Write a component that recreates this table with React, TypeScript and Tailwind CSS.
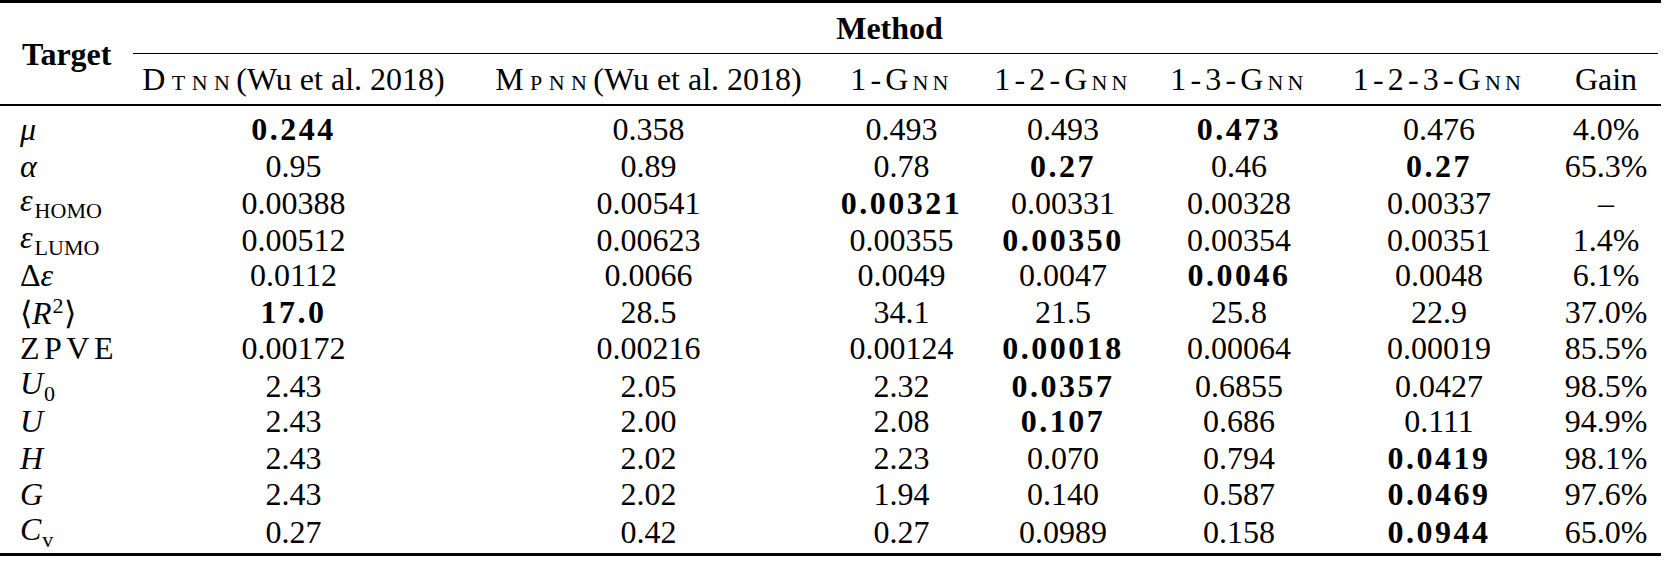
import type { ReactNode } from 'react'

// Results table data, a leading '*' marks the best value in a row
const rows: { label: ReactNode; values: string[] }[] = [
  { label: <i>μ</i>, values: ['*0.244', '0.358', '0.493', '0.493', '*0.473', '0.476', '4.0%'] },
  { label: <i>α</i>, values: ['0.95', '0.89', '0.78', '*0.27', '0.46', '*0.27', '65.3%'] },
  {
    label: (
      <span>
        <i className="pr-[2px]">ε</i>
        <span className="align-[-7px] text-[22px]">HOMO</span>
      </span>
    ),
    values: ['0.00388', '0.00541', '*0.00321', '0.00331', '0.00328', '0.00337', '–']
  },
  {
    label: (
      <span>
        <i className="pr-[2px]">ε</i>
        <span className="align-[-7px] text-[22px]">LUMO</span>
      </span>
    ),
    values: ['0.00512', '0.00623', '0.00355', '*0.00350', '0.00354', '0.00351', '1.4%']
  },
  {
    label: (
      <span>
        Δ<i>ε</i>
      </span>
    ),
    values: ['0.0112', '0.0066', '0.0049', '0.0047', '*0.0046', '0.0048', '6.1%']
  },
  {
    label: (
      <span>
        ⟨<i className="pr-[1px]">R</i>
        <span className="align-[11px] text-[22px]">2</span>⟩
      </span>
    ),
    values: ['*17.0', '28.5', '34.1', '21.5', '25.8', '22.9', '37.0%']
  },
  {
    label: <span className="tracking-[0.14em]">ZPVE</span>,
    values: ['0.00172', '0.00216', '0.00124', '*0.00018', '0.00064', '0.00019', '85.5%']
  },
  {
    label: (
      <span>
        <i className="pr-[1px]">U</i>
        <span className="align-[-7px] text-[22px]">0</span>
      </span>
    ),
    values: ['2.43', '2.05', '2.32', '*0.0357', '0.6855', '0.0427', '98.5%']
  },
  { label: <i>U</i>, values: ['2.43', '2.00', '2.08', '*0.107', '0.686', '0.111', '94.9%'] },
  { label: <i>H</i>, values: ['2.43', '2.02', '2.23', '0.070', '0.794', '*0.0419', '98.1%'] },
  { label: <i>G</i>, values: ['2.43', '2.02', '1.94', '0.140', '0.587', '*0.0469', '97.6%'] },
  {
    label: (
      <span>
        <i className="pr-[1px]">C</i>
        <span className="align-[-7px] text-[22px]">v</span>
      </span>
    ),
    values: ['0.27', '0.42', '0.27', '0.0989', '0.158', '*0.0944', '65.0%']
  }
]

const cols = 'grid grid-cols-[118px_351px_359px_147px_176px_176px_224px_110px]'

const Method = ({ name, cite }: { name: string; cite?: boolean }) => (
  <div className="flex items-center justify-center whitespace-nowrap">
    <span className={`[font-variant:small-caps] ${cite ? 'tracking-[0.2em]' : 'tracking-[0.13em]'}`}>
      {name}
    </span>
    {cite && <span>(Wu et al. 2018)</span>}
  </div>
)

const App = () => {
  return (
    <div className="w-[1661px] bg-white text-black text-[32px] leading-none font-['Liberation_Serif','Times_New_Roman',serif]">
      {/* Top rule */}
      <div className="h-[3px] bg-black" />

      {/* Header */}
      <div className={cols}>
        <div className="row-span-3 flex items-center pl-[22px] font-bold">Target</div>
        <div className="col-span-7 h-[50px] flex items-center justify-center font-bold">Method</div>
        <div className="col-span-7 h-px bg-black ml-[15px] mr-[3px]" />
        <div className="col-start-2 col-span-7 grid grid-cols-subgrid h-[50px]">
          <Method name="Dtnn" cite />
          <Method name="Mpnn" cite />
          <Method name="1-Gnn" />
          <Method name="1-2-Gnn" />
          <Method name="1-3-Gnn" />
          <Method name="1-2-3-Gnn" />
          <div className="flex items-center justify-center">Gain</div>
        </div>
      </div>

      {/* Mid rule */}
      <div className="h-[2px] bg-black" />

      {/* Body */}
      <div className={`${cols} pt-[5px] pb-[4px]`}>
        {rows.map((row, i) => (
          <div key={i} className="col-span-8 grid grid-cols-subgrid h-[36.5px] items-center">
            <div className="pl-[20px] whitespace-nowrap">{row.label}</div>
            {row.values.map((v, j) =>
              v.startsWith('*')
                ? (
                  <div key={j} className="text-center font-bold tracking-[2.5px]">
                    {v.slice(1)}
                  </div>
                  )
                : (
                  <div key={j} className="text-center">
                    {v}
                  </div>
                  )
            )}
          </div>
        ))}
      </div>

      {/* Bottom rule */}
      <div className="h-[3px] bg-black" />
    </div>
  )
}

export default App
